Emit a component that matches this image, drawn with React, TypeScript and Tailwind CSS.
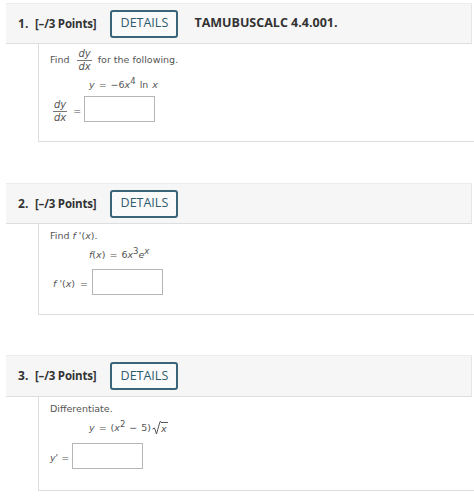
import React from "react";

const body = { fontFamily: '"DejaVu Sans", Verdana, sans-serif' };
const head = { fontFamily: '"Open Sans", "Noto Sans", sans-serif' };

function Frac({ n, d }: { n: string; d: string }) {
  return (
    <span className="inline-flex flex-col items-center align-middle italic text-[10px] leading-[10px] text-[#555]">
      <span className="px-[1px] pb-[1px]">{n}</span>
      <span className="w-full border-t border-[#777]" />
      <span className="px-[1px] pt-[1px]">{d}</span>
    </span>
  );
}

function Sup({ children, italic }: { children: React.ReactNode; italic?: boolean }) {
  return (
    <span className={`${italic ? "italic" : "not-italic"} text-[8.5px] relative -top-[4px]`}>{children}</span>
  );
}

function Header({ num, extra, h }: { num: string; extra?: string; h: string }) {
  return (
    <div
      className={`ml-[6px] mr-[2px] ${h} flex items-center bg-[#f6f6f6] border-t border-[#ececec] border-b border-b-[#dedede] border-r border-r-[#e6e6e6]`}
      style={head}
    >
      <span className="ml-[12px] text-[12px] font-bold text-[#333] w-[17px]">{num}.</span>
      <span className="text-[11.5px] font-bold text-[#333] tracking-[-0.2px]">[–/3 Points]</span>
      <span className="ml-[14px] h-[28px] w-[68px] flex items-center justify-center rounded-[3px] border-2 border-[#3a6477] text-[12.5px] font-medium text-[#2e5a6e] bg-[#fafafa]">
        DETAILS
      </span>
      {extra && <span className="ml-[16px] text-[12.5px] font-bold text-[#333]">{extra}</span>}
    </div>
  );
}

function Box({ children, h }: { children: React.ReactNode; h: string }) {
  return (
    <div
      className={`ml-[38px] mr-[-10px] ${h} border-l border-b border-r border-[#dcdcdc] bg-white pl-[11px] text-[9.5px] text-[#555]`}
      style={body}
    >
      {children}
    </div>
  );
}

function Input() {
  return <span className="inline-block w-[71px] h-[26px] border border-[#b5b5b5] bg-white" />;
}

export default function App() {
  return (
    <div className="w-[474px] h-[499px] bg-white overflow-hidden">
      <div className="pt-[3px]">
        <Header num="1" extra="TAMUBUSCALC 4.4.001." h="h-[41px]" />
        <Box h="h-[98px]">
          <div className="pt-[5px] flex items-center h-[27px]">
            <span>Find</span>
            <span className="ml-[8px]"><Frac n="dy" d="dx" /></span>
            <span className="ml-[6px]">for the following.</span>
          </div>
          <div className="mt-[7px] ml-[39px] italic h-[14px] flex items-center">
            <span>y</span>
            <span className="not-italic mx-[4px]">=</span>
            <span className="not-italic">−6</span>
            <span>x</span>
            <Sup>4</Sup>
            <span className="not-italic ml-[4px]">ln</span>
            <span className="ml-[4px]">x</span>
          </div>
          <div className="mt-[4px] flex items-center ml-[3px]">
            <Frac n="dy" d="dx" />
            <span className="ml-[6px]">=</span>
            <span className="ml-[3px]"><Input /></span>
          </div>
        </Box>
      </div>

      <div className="mt-[41px]">
        <Header num="2" h="h-[41px]" />
        <Box h="h-[91px]">
          <div className="pt-[5px] h-[19px] flex items-center">
            <span>Find&nbsp;</span>
            <span className="italic">f&nbsp;</span>
            <span>'(</span>
            <span className="italic">x</span>
            <span>).</span>
          </div>
          <div className="mt-[5px] ml-[39px] h-[14px] flex items-center">
            <span className="italic">f</span>(<span className="italic">x</span>)
            <span className="mx-[4px]">=</span>
            <span>6</span>
            <span className="italic">x</span>
            <Sup>3</Sup>
            <span className="italic">e</span>
            <Sup italic>x</Sup>
          </div>
          <div className="mt-[7px] ml-[3px] flex items-center">
            <span className="italic">f&nbsp;</span>
            <span>'(</span>
            <span className="italic">x</span>
            <span>)</span>
            <span className="ml-[5px]">=</span>
            <span className="ml-[4px]"><Input /></span>
          </div>
        </Box>
      </div>

      <div className="mt-[40px]">
        <Header num="3" h="h-[42px]" />
        <Box h="h-[94px]">
          <div className="pt-[6px] h-[19px] flex items-center">
            <span>Differentiate.</span>
          </div>
          <div className="mt-[4px] ml-[39px] h-[16px] flex items-center">
            <span className="italic">y</span>
            <span className="mx-[4px]">=</span>
            <span>(</span>
            <span className="italic">x</span>
            <Sup>2</Sup>
            <span className="mx-[4px]">−</span>
            <span>5)</span>
            <svg width="9" height="14" viewBox="0 0 9 14" className="ml-[1px]">
              <path d="M0.5 8 L2.5 7 L4.5 13 L8 0.6 L9 0.6" fill="none" stroke="#555" strokeWidth="1" />
            </svg>
            <span className="italic border-t border-[#555] leading-[12px] mt-[1px] pr-[1px]">x</span>
          </div>
          <div className="mt-[7px] flex items-center">
            <span className="italic">y'</span>
            <span className="ml-[3px]">=</span>
            <span className="ml-[3px]"><Input /></span>
          </div>
        </Box>
      </div>
    </div>
  );
}
